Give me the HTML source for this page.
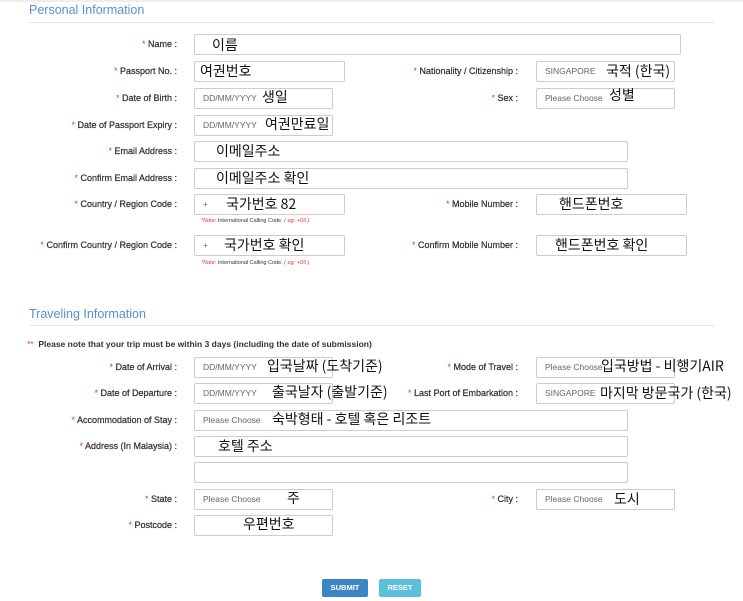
<!DOCTYPE html>
<html><head><meta charset="utf-8"><style>
*{margin:0;padding:0;box-sizing:border-box}
body{width:743px;height:601px;background:#fff;position:relative;overflow:hidden;font-family:"Liberation Sans",Arial,sans-serif}
.top{position:absolute;left:0;top:0;width:743px;height:2px;background:#eee}
.h{position:absolute;left:29px;font-size:12.5px;color:#5b8fc9}
.rule{position:absolute;left:29px;width:685px;height:1px;background:#e5e5e5}
.l{position:absolute;font-size:9px;color:#333;text-align:right;white-space:nowrap;font-family:"Liberation Sans",sans-serif;-webkit-text-stroke:0.25px #333}
.l b{color:#e33;font-weight:normal;-webkit-text-stroke:0}
.i{position:absolute;height:21px;border:1px solid #ccc;border-radius:2px;background:#fff;font-size:8.5px;color:#666;padding-left:8px;line-height:19px;white-space:nowrap}
.k{position:absolute;font-family:"Noto Sans CJK KR","NanumGothic",sans-serif;font-size:14px;color:#111;white-space:nowrap;line-height:16px}
.n{position:absolute;font-size:5.5px;color:#333;white-space:nowrap}
.n i,.n em{color:#e33}
.btn{position:absolute;top:579px;height:18px;border-radius:2px;color:#fff;font-size:7.5px;font-weight:bold;text-align:center;line-height:18px}
</style></head><body>
<div class="top"></div>
<div class="h" style="top:3px">Personal Information</div>
<div class="rule" style="top:22px"></div>

<div class="l" style="right:566px;top:39px"><b>*</b> Name :</div>
<div class="i" style="left:194px;top:34px;width:487px"></div>
<div class="k" style="left:212px;top:37px">이름</div>

<div class="l" style="right:566px;top:66px"><b>*</b> Passport No. :</div>
<div class="i" style="left:194px;top:61px;width:151px"></div>
<div class="k" style="left:200px;top:63px">여권번호</div>

<div class="l" style="right:225px;top:66px"><b>*</b> Nationality / Citizenship :</div>
<div class="i" style="left:536px;top:61px;width:139px">SINGAPORE</div>
<div class="k" style="left:606px;top:63px">국적 (한국)</div>

<div class="l" style="right:566px;top:93px"><b>*</b> Date of Birth :</div>
<div class="i" style="left:194px;top:88px;width:139px">DD/MM/YYYY</div>
<div class="k" style="left:262px;top:89px">생일</div>

<div class="l" style="right:225px;top:93px"><b>*</b> Sex :</div>
<div class="i" style="left:536px;top:88px;width:139px">Please Choose</div>
<div class="k" style="left:609px;top:87px">성별</div>

<div class="l" style="right:566px;top:120px"><b>*</b> Date of Passport Expiry :</div>
<div class="i" style="left:194px;top:115px;width:139px">DD/MM/YYYY</div>
<div class="k" style="left:265px;top:116px">여권만료일</div>

<div class="l" style="right:566px;top:146px"><b>*</b> Email Address :</div>
<div class="i" style="left:194px;top:141px;width:434px"></div>
<div class="k" style="left:216px;top:143px">이메일주소</div>

<div class="l" style="right:566px;top:173px"><b>*</b> Confirm Email Address :</div>
<div class="i" style="left:194px;top:168px;width:434px"></div>
<div class="k" style="left:216px;top:170px">이메일주소 확인</div>

<div class="l" style="right:566px;top:199px"><b>*</b> Country / Region Code :</div>
<div class="i" style="left:194px;top:194px;width:151px">+</div>
<div class="k" style="left:226px;top:196px">국가번호 82</div>
<div class="n" style="left:201px;top:218px"><i>*Note:</i> International Calling Code. <em>( eg: +65 )</em></div>

<div class="l" style="right:225px;top:199px"><b>*</b> Mobile Number :</div>
<div class="i" style="left:536px;top:194px;width:151px"></div>
<div class="k" style="left:559px;top:196px">핸드폰번호</div>

<div class="l" style="right:566px;top:240px"><b>*</b> Confirm Country / Region Code :</div>
<div class="i" style="left:194px;top:235px;width:151px">+</div>
<div class="k" style="left:224px;top:237px">국가번호 확인</div>
<div class="n" style="left:201px;top:260px"><i>*Note:</i> International Calling Code. <em>( eg: +65 )</em></div>

<div class="l" style="right:225px;top:240px"><b>*</b> Confirm Mobile Number :</div>
<div class="i" style="left:536px;top:235px;width:151px"></div>
<div class="k" style="left:555px;top:237px">핸드폰번호 확인</div>

<div class="h" style="top:307px">Traveling Information</div>
<div class="rule" style="top:325px"></div>
<div class="l" style="left:27px;top:339px;font-size:8.5px;font-weight:bold;-webkit-text-stroke:0"><b>**</b>&nbsp; Please note that your trip must be within 3 days (including the date of submission)</div>

<div class="l" style="right:566px;top:362px"><b>*</b> Date of Arrival :</div>
<div class="i" style="left:194px;top:357px;width:139px">DD/MM/YYYY</div>
<div class="k" style="left:267px;top:358px">입국날짜 (도착기준)</div>

<div class="l" style="right:225px;top:362px"><b>*</b> Mode of Travel :</div>
<div class="i" style="left:536px;top:357px;width:139px">Please Choose</div>
<div class="k" style="left:601px;top:358px">입국방법 - 비행기AIR</div>

<div class="l" style="right:566px;top:388px"><b>*</b> Date of Departure :</div>
<div class="i" style="left:194px;top:383px;width:139px">DD/MM/YYYY</div>
<div class="k" style="left:272px;top:384px">출국날자 (출발기준)</div>

<div class="l" style="right:225px;top:388px"><b>*</b> Last Port of Embarkation :</div>
<div class="i" style="left:536px;top:383px;width:139px">SINGAPORE</div>
<div class="k" style="left:600px;top:385px">마지막 방문국가 (한국)</div>

<div class="l" style="right:566px;top:415px"><b>*</b> Accommodation of Stay :</div>
<div class="i" style="left:194px;top:410px;width:434px">Please Choose</div>
<div class="k" style="left:272px;top:411px">숙박형태 - 호텔 혹은 리조트</div>

<div class="l" style="right:566px;top:441px"><b>*</b> Address (In Malaysia) :</div>
<div class="i" style="left:194px;top:436px;width:434px"></div>
<div class="k" style="left:218px;top:438px">호텔 주소</div>

<div class="i" style="left:194px;top:462px;width:434px"></div>

<div class="l" style="right:566px;top:494px"><b>*</b> State :</div>
<div class="i" style="left:194px;top:489px;width:139px">Please Choose</div>
<div class="k" style="left:287px;top:490px">주</div>

<div class="l" style="right:225px;top:494px"><b>*</b> City :</div>
<div class="i" style="left:536px;top:489px;width:139px">Please Choose</div>
<div class="k" style="left:614px;top:491px">도시</div>

<div class="l" style="right:566px;top:520px"><b>*</b> Postcode :</div>
<div class="i" style="left:194px;top:515px;width:139px"></div>
<div class="k" style="left:243px;top:516px">우편번호</div>

<div class="btn" style="left:322px;width:46px;background:#3d86c6">SUBMIT</div>
<div class="btn" style="left:379px;width:42px;background:#5bc0de">RESET</div>
</body></html>
